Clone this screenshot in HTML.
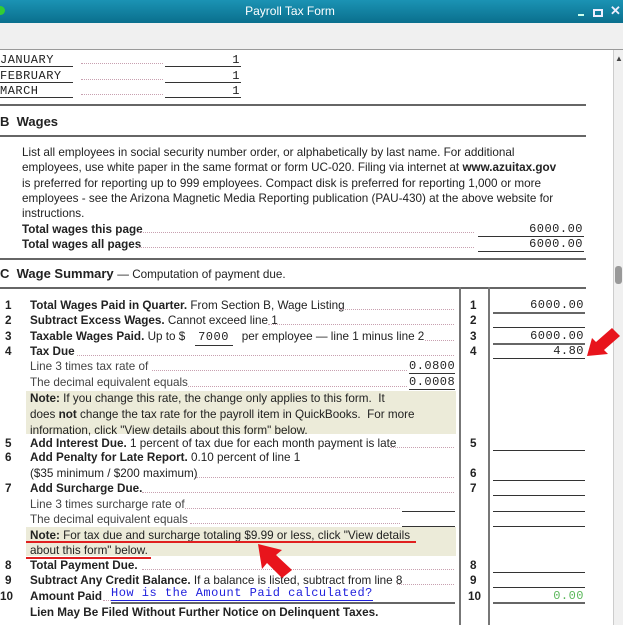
<!DOCTYPE html>
<html><head><meta charset="utf-8"><style>
*{margin:0;padding:0;box-sizing:border-box}
body{width:623px;height:625px;overflow:hidden;background:#fff;font-family:"Liberation Sans",Arial,sans-serif;font-size:11.7px;color:#222;position:relative}
.a{position:absolute;white-space:nowrap;line-height:15px}
.m{font-family:"Liberation Mono",monospace;font-size:12px;letter-spacing:.5px}
.b{font-weight:bold}
.hl{position:absolute;height:1px;background:#333}
.hr{position:absolute;height:2px;background:#666}
.dot{position:absolute;height:1px;border-bottom:1px dotted #c8a0b0}
.r{text-align:right}
</style></head><body>
<div style="position:absolute;left:0;top:0;width:623px;height:23px;background:linear-gradient(#1b93b4,#0a6f8d);"></div>
<div style="position:absolute;left:-4px;top:6px;width:9px;height:9px;border-radius:50%;background:#3c3;"></div>
<div class="a" style="left:0;width:580px;top:4px;text-align:center;color:#fff;font-size:12px">Payroll Tax Form</div>
<div style="position:absolute;left:578px;top:14px;width:6px;height:2px;background:#cfe"></div>
<div style="position:absolute;left:593px;top:9px;width:10px;height:8px;border:2px solid #eef"></div>
<div class="a b" style="left:610px;top:3px;color:#eef;font-size:13px">✕</div>
<div style="position:absolute;left:0;top:23px;width:623px;height:27px;background:#f0f0f0;border-bottom:1px solid #999"></div>
<div style="position:absolute;left:613px;top:50px;width:10px;height:575px;background:#f0f0f0;border-left:1px solid #ccc"></div>
<div class="a" style="left:615px;top:51px;font-size:8px;color:#444">▲</div>
<div style="position:absolute;left:615px;top:266px;width:7px;height:18px;border-radius:3px;background:#999"></div>

<div class="a m" style="left:0;top:53px">JANUARY</div><div class="hl" style="left:0;top:66px;width:73px"></div>
<div class="a m" style="left:0;top:69px">FEBRUARY</div><div class="hl" style="left:0;top:82px;width:73px"></div>
<div class="a m" style="left:0;top:84px">MARCH</div><div class="hl" style="left:0;top:97px;width:73px"></div>
<div class="dot" style="left:81px;top:63px;width:82px"></div><div class="dot" style="left:81px;top:79px;width:82px"></div><div class="dot" style="left:81px;top:94px;width:82px"></div>
<div class="a m r" style="left:165px;width:75px;top:53px">1</div><div class="hl" style="left:165px;top:66px;width:76px"></div>
<div class="a m r" style="left:165px;width:75px;top:69px">1</div><div class="hl" style="left:165px;top:82px;width:76px"></div>
<div class="a m r" style="left:165px;width:75px;top:84px">1</div><div class="hl" style="left:165px;top:97px;width:76px"></div>
<div class="hr" style="left:0;top:104px;width:586px"></div>

<div class="a b" style="left:0;top:114px;font-size:13px">B&nbsp; Wages</div>
<div class="hr" style="left:0;top:135px;width:586px"></div>
<div class="a" style="left:22px;top:145px;line-height:15.3px;white-space:normal;width:570px">List all employees in social security number order, or alphabetically by last name. For additional<br>employees, use white paper in the same format or form UC-020. Filing via internet at <b>www.azuitax.gov</b><br>is preferred for reporting up to 999 employees. Compact disk is preferred for reporting 1,000 or more<br>employees - see the Arizona Magnetic Media Reporting publication (PAU-430) at the above website for<br>instructions.</div>
<div class="a b" style="left:22px;top:222px">Total wages this page</div><div class="dot" style="left:138px;top:232px;width:336px"></div>
<div class="a m r" style="left:478px;width:105px;top:222px">6000.00</div><div class="hl" style="left:478px;top:236px;width:106px"></div>
<div class="a b" style="left:22px;top:237px">Total wages all pages</div><div class="dot" style="left:138px;top:247px;width:336px"></div>
<div class="a m r" style="left:478px;width:105px;top:237px">6000.00</div><div class="hl" style="left:478px;top:251px;width:106px"></div>
<div class="hr" style="left:0;top:258px;width:586px"></div>
<div class="a" style="left:0;top:266px;font-size:13px"><b>C&nbsp; Wage Summary</b> <span style="font-size:11.7px">— Computation of payment due.</span></div>
<div class="hr" style="left:0;top:287px;width:586px"></div>
<div style="position:absolute;left:459px;top:287px;width:2px;height:338px;background:#777"></div>
<div style="position:absolute;left:488px;top:287px;width:2px;height:338px;background:#777"></div>

<div style="position:absolute;left:26px;top:391px;width:430px;height:43px;background:#ecebd9"></div>
<div style="position:absolute;left:26px;top:527px;width:430px;height:29px;background:#ecebd9"></div>

<div class="a b" style="left:5px;top:298px">1</div><div class="a" style="left:30px;top:298px"><b>Total Wages Paid in Quarter.</b> From Section B, Wage Listing</div><div class="dot" style="left:340px;top:309px;width:114px"></div>
<div class="a b" style="left:5px;top:313px">2</div><div class="a" style="left:30px;top:313px"><b>Subtract Excess Wages.</b> Cannot exceed line 1</div><div class="dot" style="left:268px;top:324px;width:186px"></div>
<div class="a b" style="left:5px;top:329px">3</div><div class="a" style="left:30px;top:329px"><b>Taxable Wages Paid.</b> Up to $ <span class="m" style="display:inline-block;width:38px;text-align:center;border-bottom:1px solid #333;margin:0 6px">7000</span> per employee — line 1 minus line 2</div><div class="dot" style="left:425px;top:340px;width:29px"></div>
<div class="a b" style="left:5px;top:344px">4</div><div class="a b" style="left:30px;top:344px">Tax Due</div><div class="dot" style="left:77px;top:355px;width:377px"></div>
<div class="a" style="left:30px;top:359px;color:#444">Line 3 times tax rate of</div><div class="dot" style="left:152px;top:370px;width:255px"></div>
<div class="a m r" style="left:409px;width:45px;top:359px">0.0800</div><div class="hl" style="left:409px;top:373px;width:46px"></div>
<div class="a" style="left:30px;top:375px;color:#444">The decimal equivalent equals</div><div class="dot" style="left:188px;top:386px;width:219px"></div>
<div class="a m r" style="left:409px;width:45px;top:375px">0.0008</div><div class="hl" style="left:409px;top:389px;width:46px"></div>
<div class="a" style="left:30px;top:391px;line-height:16px"><b>Note:</b> If you change this rate, the change only applies to this form.&nbsp; It<br>does <b>not</b> change the tax rate for the payroll item in QuickBooks.&nbsp; For more<br>information, click "View details about this form" below.</div>
<div class="a b" style="left:5px;top:436px">5</div><div class="a" style="left:30px;top:436px"><b>Add Interest Due.</b> 1 percent of tax due for each month payment is late</div><div class="dot" style="left:390px;top:447px;width:64px"></div>
<div class="a b" style="left:5px;top:450px">6</div><div class="a" style="left:30px;top:450px"><b>Add Penalty for Late Report.</b> 0.10 percent of line 1</div>
<div class="a" style="left:30px;top:466px">($35 minimum / $200 maximum)</div><div class="dot" style="left:196px;top:477px;width:258px"></div>
<div class="a b" style="left:5px;top:481px">7</div><div class="a b" style="left:30px;top:481px">Add Surcharge Due.</div><div class="dot" style="left:142px;top:492px;width:312px"></div>
<div class="a" style="left:30px;top:497px;color:#444">Line 3 times surcharge rate of</div><div class="dot" style="left:185px;top:508px;width:215px"></div><div class="hl" style="left:402px;top:511px;width:53px"></div>
<div class="a" style="left:30px;top:512px;color:#444">The decimal equivalent equals</div><div class="dot" style="left:190px;top:523px;width:210px"></div><div class="hl" style="left:402px;top:526px;width:53px"></div>
<div class="a" style="left:30px;top:528px;line-height:15px"><b>Note:</b> For tax due and surcharge totaling $9.99 or less, click "View details<br>about this form" below.</div>
<div style="position:absolute;left:26px;top:541px;width:390px;height:2px;background:#e02020"></div>
<div style="position:absolute;left:26px;top:557px;width:125px;height:2px;background:#e02020"></div>
<div class="a b" style="left:5px;top:558px">8</div><div class="a b" style="left:30px;top:558px">Total Payment Due.</div><div class="dot" style="left:142px;top:569px;width:312px"></div>
<div class="a b" style="left:5px;top:573px">9</div><div class="a" style="left:30px;top:573px"><b>Subtract Any Credit Balance.</b> If a balance is listed, subtract from line 8</div><div class="dot" style="left:397px;top:584px;width:57px"></div>
<div class="a b" style="left:0px;top:589px">10</div><div class="a b" style="left:30px;top:589px">Amount Paid</div><div class="dot" style="left:103px;top:600px;width:8px"></div>
<div class="a m" style="left:111px;top:586px;color:#2222dd;border-bottom:1px solid #2222dd;line-height:14px">How is the Amount Paid calculated?</div>
<div class="hr" style="left:111px;top:602px;width:344px"></div>
<div class="a b" style="left:30px;top:605px">Lien May Be Filed Without Further Notice on Delinquent Taxes.</div>

<div class="a b" style="left:470px;top:298px">1</div><div class="a m r" style="left:493px;width:91px;top:298px">6000.00</div><div class="hr" style="left:493px;top:312px;width:92px"></div>
<div class="a b" style="left:470px;top:313px">2</div><div class="hl" style="left:493px;top:327px;width:92px"></div>
<div class="a b" style="left:470px;top:329px">3</div><div class="a m r" style="left:493px;width:91px;top:329px">6000.00</div><div class="hr" style="left:493px;top:343px;width:92px"></div>
<div class="a b" style="left:470px;top:344px">4</div><div class="a m r" style="left:493px;width:91px;top:344px">4.80</div><div class="hl" style="left:493px;top:358px;width:92px"></div>
<div class="a b" style="left:470px;top:436px">5</div><div class="hl" style="left:493px;top:450px;width:92px"></div>
<div class="a b" style="left:470px;top:466px">6</div><div class="hl" style="left:493px;top:480px;width:92px"></div>
<div class="a b" style="left:470px;top:481px">7</div><div class="hl" style="left:493px;top:495px;width:92px"></div>
<div class="hl" style="left:493px;top:511px;width:92px"></div><div class="hl" style="left:493px;top:526px;width:92px"></div>
<div class="a b" style="left:470px;top:558px">8</div><div class="hl" style="left:493px;top:572px;width:92px"></div>
<div class="a b" style="left:470px;top:573px">9</div><div class="hl" style="left:493px;top:587px;width:92px"></div>
<div class="a b" style="left:468px;top:589px">10</div><div class="a m r" style="left:493px;width:91px;top:589px;color:#5bb85b">0.00</div><div class="hr" style="left:493px;top:602px;width:92px"></div>

<svg style="position:absolute;left:0;top:0" width="623" height="625">
<polygon points="587,356 592,338 596,342 612,328 620,336 604,350 608,354" fill="#e8141c"/>
<polygon points="258,544 282,550 276,555 292,570 282,578 267,563 262,569" fill="#e8141c"/>
</svg>
</body></html>
